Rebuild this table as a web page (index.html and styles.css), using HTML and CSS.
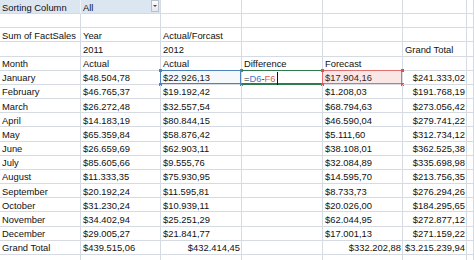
FILE: index.html
```html
<!DOCTYPE html>
<html lang="en">
<head>
  <meta charset="UTF-8">
  <title>FactSales Pivot</title>
  <link rel="stylesheet" href="styles.css">
</head>
<body>
  <div class="sheet">
    <!-- row 1: report filter -->
    <div class="c filter">Sorting Column</div>
    <div class="c filter filter-value">All<span class="drop"></span></div>
    <div class="c"></div><div class="c"></div><div class="c"></div><div class="c"></div><div class="c"></div>

    <!-- row 2 -->
    <div class="c"></div><div class="c"></div><div class="c"></div><div class="c"></div><div class="c"></div><div class="c"></div><div class="c"></div>

    <!-- headers -->
    <div class="c">Sum of FactSales</div><div class="c">Year</div><div class="c">Actual/Forcast</div><div class="c"></div><div class="c"></div><div class="c"></div><div class="c"></div>
    <div class="c"></div><div class="c">2011</div><div class="c">2012</div><div class="c"></div><div class="c"></div><div class="c">Grand Total</div><div class="c"></div>
    <div class="c">Month</div><div class="c">Actual</div><div class="c">Actual</div><div class="c">Difference</div><div class="c">Forecast</div><div class="c"></div><div class="c"></div>

    <!-- January, with the formula being edited -->
    <div class="c">January</div>
    <div class="c">$48.504,78</div>
    <div class="c ref-blue">$22.926,13<i class="h tl"></i><i class="h tr"></i><i class="h bl"></i><i class="h br"></i></div>
    <div class="c editing">=<span class="f-blue">D6</span>-<span class="f-red">F6</span><span class="caret"></span></div>
    <div class="c ref-red">$17.904,16<i class="h tl"></i><i class="h tr"></i><i class="h bl"></i><i class="h br"></i></div>
    <div class="c r">$241.333,02</div>
    <div class="c"></div>

    <div class="c">February</div><div class="c">$46.765,37</div><div class="c">$19.192,42</div><div class="c"></div><div class="c">$1.208,03</div><div class="c r">$191.768,19</div><div class="c"></div>
    <div class="c">March</div><div class="c">$26.272,48</div><div class="c">$32.557,54</div><div class="c"></div><div class="c">$68.794,63</div><div class="c r">$273.056,42</div><div class="c"></div>
    <div class="c">April</div><div class="c">$14.183,19</div><div class="c">$80.844,15</div><div class="c"></div><div class="c">$46.590,04</div><div class="c r">$279.741,22</div><div class="c"></div>
    <div class="c">May</div><div class="c">$65.359,84</div><div class="c">$58.876,42</div><div class="c"></div><div class="c">$5.111,60</div><div class="c r">$312.734,12</div><div class="c"></div>
    <div class="c">June</div><div class="c">$26.659,69</div><div class="c">$62.903,11</div><div class="c"></div><div class="c">$38.108,01</div><div class="c r">$362.525,38</div><div class="c"></div>
    <div class="c">July</div><div class="c">$85.605,66</div><div class="c">$9.555,76</div><div class="c"></div><div class="c">$32.084,89</div><div class="c r">$335.698,98</div><div class="c"></div>
    <div class="c">August</div><div class="c">$11.333,35</div><div class="c">$75.930,95</div><div class="c"></div><div class="c">$14.595,70</div><div class="c r">$213.756,35</div><div class="c"></div>
    <div class="c">September</div><div class="c">$20.192,24</div><div class="c">$11.595,81</div><div class="c"></div><div class="c">$8.733,73</div><div class="c r">$276.294,26</div><div class="c"></div>
    <div class="c">October</div><div class="c">$31.230,24</div><div class="c">$10.939,11</div><div class="c"></div><div class="c">$20.026,00</div><div class="c r">$184.295,65</div><div class="c"></div>
    <div class="c">November</div><div class="c">$34.402,94</div><div class="c">$25.251,29</div><div class="c"></div><div class="c">$62.044,95</div><div class="c r">$272.877,12</div><div class="c"></div>
    <div class="c">December</div><div class="c">$29.005,27</div><div class="c">$21.841,77</div><div class="c"></div><div class="c">$17.001,13</div><div class="c r">$271.159,22</div><div class="c"></div>

    <!-- totals -->
    <div class="c">Grand Total</div><div class="c">$439.515,06</div><div class="c r">$432.414,45</div><div class="c"></div><div class="c r">$332.202,88</div><div class="c r">$3.215.239,94</div><div class="c"></div>

    <div class="c"></div><div class="c"></div><div class="c"></div><div class="c"></div><div class="c"></div><div class="c"></div><div class="c"></div>
  </div>
</body>
</html>
```

FILE: styles.css
```css
body {
  margin: 0;
  background: #fff;
  overflow: hidden;
}

.sheet {
  display: grid;
  grid-template-columns: 81px 80px 81px 81px 80px 64px 7px;
  grid-auto-rows: 14.17px;
  font-family: 'Liberation Sans', Arial, sans-serif;
  font-size: 9.4px;
  color: #111;
}

.c {
  position: relative;
  box-sizing: border-box;
  border-right: 1px solid #d6dbe3;
  border-bottom: 1px solid #d6dbe3;
  padding: 1.5px 2px 0 2px;
  line-height: 12px;
  white-space: nowrap;
}

.r {
  text-align: right;
  padding-right: 1px;
}

/* report filter row */
.filter {
  background: #dce6f1;
  border-right-color: #eef3f9;
}

.filter-value {
  border-right-color: #d6dbe3;
}

.drop {
  position: absolute;
  right: 1px;
  top: 0;
  width: 8px;
  height: 12px;
  box-sizing: border-box;
  border: 1px solid #b9c1cc;
  background: linear-gradient(#fdfdfd, #e4e7ec);
}

.drop::after {
  content: "";
  position: absolute;
  left: 1px;
  top: 4px;
  border-left: 2px solid transparent;
  border-right: 2px solid transparent;
  border-top: 2px solid #444;
}

/* formula reference highlights */
.ref-blue::before,
.ref-red::before {
  content: "";
  position: absolute;
  top: -1px;
  left: -1px;
  right: 0;
  bottom: 0;
  border: 1px solid #4f81bd;
  pointer-events: none;
}

.ref-blue::before {
  background: rgba(79, 129, 189, 0.05);
}

.ref-red::before {
  border-color: #e07070;
  background: rgba(230, 100, 100, 0.16);
}

.h {
  position: absolute;
  width: 3px;
  height: 3px;
  background: #4f81bd;
}

.ref-red .h {
  background: #d9534f;
}

.h.tl { left: -2px; top: -2px; }
.h.tr { right: -2px; top: -2px; }
.h.bl { left: -2px; bottom: -2px; }
.h.br { right: -2px; bottom: -2px; }

.editing {
  border-right: 1px solid #1f3a2b;
  box-shadow: inset 0 1px 0 #2f7a4c, inset 0 -1px 0 #2f7a4c;
  border-bottom-color: #2f7a4c;
  margin-top: -1px;
  padding-top: 2.5px;
}

.f-blue {
  color: #3b78d0;
}

.f-red {
  color: #e05c5c;
}

.caret {
  display: inline-block;
  width: 1px;
  height: 13px;
  margin-left: 1px;
  background: #111;
  vertical-align: -3px;
}
```
